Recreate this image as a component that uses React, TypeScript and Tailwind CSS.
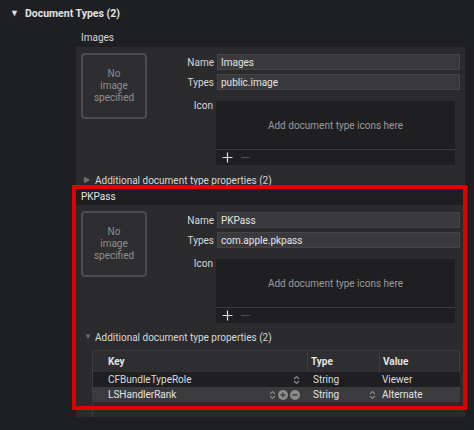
import React from "react";

function Stepper({ className = "" }: { className?: string }) {
  return (
    <svg width="7" height="10" viewBox="0 0 7 10" className={className}>
      <path d="M1 4 L3.5 1.5 L6 4" fill="none" stroke="#8a8a8c" strokeWidth="1.1" />
      <path d="M1 6 L3.5 8.5 L6 6" fill="none" stroke="#8a8a8c" strokeWidth="1.1" />
    </svg>
  );
}

function RoundBtn({ minus }: { minus?: boolean }) {
  return (
    <svg width="10" height="10" viewBox="0 0 10 10">
      <circle cx="5" cy="5" r="5" fill="#8c8c8e" />
      <path d="M2.5 5 H7.5" stroke="#3c3c3e" strokeWidth="1.4" />
      {!minus && <path d="M5 2.5 V7.5" stroke="#3c3c3e" strokeWidth="1.4" />}
    </svg>
  );
}

function Disclosure({ open }: { open: boolean }) {
  return (
    <span className="w-[11px] text-[8px] leading-none text-[#6f6f72]">{open ? "▼" : "▶"}</span>
  );
}

function NoImage() {
  return (
    <div className="w-[66px] h-[66px] shrink-0 rounded-[4px] border-2 border-[#4d4d4f] bg-[#2e2e30] flex items-center justify-center text-center text-[10px] leading-[12px] text-[#8e8e90]">
      No
      <br />
      image
      <br />
      specified
    </div>
  );
}

function Field({ label, value }: { label: string; value: string }) {
  return (
    <div className="flex items-center h-[16px]">
      <span className="w-[70px] pr-[3px] text-right text-[#d8d8d8]">{label}</span>
      <div className="flex-1 h-[16px] bg-[#3a3a3c] border border-[#454547] flex items-center px-[3px] text-[#e4e4e4]">
        {value}
      </div>
    </div>
  );
}

function DocPanel({
  name,
  types,
  open,
  children,
}: {
  name: string;
  types: string;
  open: boolean;
  children?: React.ReactNode;
}) {
  return (
    <div className="bg-[#2b2b2d] pt-[6px] pl-[5px] pr-[5px]">
      <div className="flex">
        <NoImage />
        <div className="flex-1 mt-[1px] flex flex-col gap-[4px]">
          <Field label="Name" value={name} />
          <Field label="Types" value={types} />
          <div className="flex mt-[7px]">
            <span className="w-[69px] pr-[3px] text-right text-[#d8d8d8] leading-[10px]">Icon</span>
            <div className="w-[239px] flex flex-col">
              <div className="h-[49px] bg-[#1f1f22] border-b border-[#3a3a3c] flex items-center justify-center text-[#9a9a9c]">
                Add document type icons here
              </div>
              <div className="h-[15px] bg-[#1f1f22] flex items-center pl-[6px] gap-[8px]">
                <svg width="11" height="11" viewBox="0 0 11 11">
                  <path d="M5.5 0.5 V10.5 M0.5 5.5 H10.5" stroke="#e0e0e0" strokeWidth="1.2" />
                </svg>
                <svg width="9" height="11" viewBox="0 0 9 11">
                  <path d="M0 5.5 H9" stroke="#4e4e50" strokeWidth="1.2" />
                </svg>
              </div>
            </div>
          </div>
        </div>
      </div>
      <div className={`flex items-center h-[16px] pl-[3px] ${open ? "mt-[6px]" : "mt-[7px]"}`}>
        <Disclosure open={open} />
        <span className="text-[#d8d8d8]">Additional document type properties (2)</span>
      </div>
      {children}
    </div>
  );
}

export default function App() {
  return (
    <div
      className="relative w-[474px] h-[430px] overflow-hidden bg-[#1e1f23] text-[10px]"
      style={{ fontFamily: "Roboto, 'Liberation Sans', sans-serif" }}
    >
      <div className="h-[27px] pt-[1px] flex items-center pl-[10px] gap-[6px] text-[#e2e2e2] font-bold text-[10.5px]">
        <span className="text-[9px]">▼</span>
        <span>Document Types (2)</span>
      </div>

      <div className="ml-[76px] w-[389px]">
        <div className="h-[20px] pt-[1px] flex items-center pl-[5px] text-[#d8d8d8]">Images</div>
        <DocPanel name="Images" types="public.image" open={false} />

        <div className="h-[17px] bg-[#1e1e21] flex items-center pl-[5px] text-[#e4e4e4]">PKPass</div>
        <DocPanel name="PKPass" types="com.apple.pkpass" open>
          <div className="mt-[5px] ml-[11px] mb-[6px] bg-[#2a2a2c] border-l border-[#3c3c3e]">
            <div className="h-[22px] flex items-center bg-[#2e2e30] border-t border-[#3a3a3c] text-[#e4e4e4] font-bold">
              <div className="w-[214px] pl-[15px]">Key</div>
              <div className="w-[72px] h-full flex items-center border-l border-[#3e3e40] pl-[3px]">Type</div>
              <div className="flex-1 h-full flex items-center border-l border-[#3e3e40] border-r pl-[3px]">Value</div>
            </div>
            <div className="h-[15px] flex items-center bg-[#1f1f21] text-[#dcdcdc]">
              <div className="w-[214px] pl-[15px] flex items-center justify-between pr-[7px]">
                <span>CFBundleTypeRole</span>
                <Stepper />
              </div>
              <div className="w-[72px] pl-[6px]">String</div>
              <div className="flex-1 pl-[3px]">Viewer</div>
            </div>
            <div className="h-[15px] flex items-center bg-[#3b3b3d] text-[#e2e2e2]">
              <div className="w-[214px] pl-[15px] flex items-center pr-[7px]">
                <span className="flex-1">LSHandlerRank</span>
                <div className="flex items-center gap-[2px]">
                  <Stepper />
                  <RoundBtn />
                  <RoundBtn minus />
                </div>
              </div>
              <div className="w-[72px] pl-[6px] flex items-center justify-between pr-[3px]">
                <span>String</span>
                <Stepper />
              </div>
              <div className="flex-1 pl-[3px]">Alternate</div>
            </div>
            <div className="h-[15px]" />
          </div>
        </DocPanel>
      </div>

      <div className="absolute left-[72px] top-[185px] w-[395px] h-[225px] border-4 border-[#e00000]" />
    </div>
  );
}
